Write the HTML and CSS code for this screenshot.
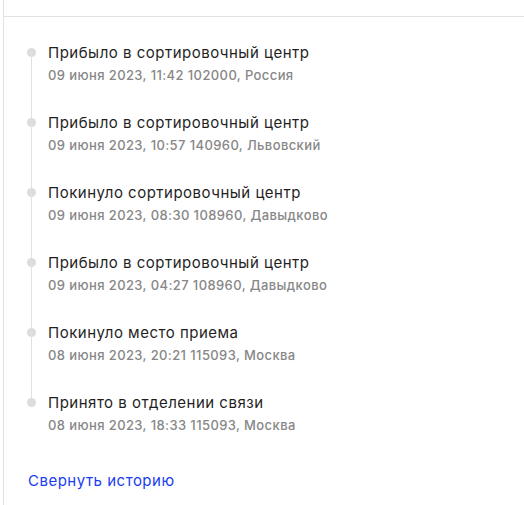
FILE: index.html
```html
<!DOCTYPE html>
<html lang="ru">
<head>
<meta charset="utf-8">
<link rel="stylesheet" href="styles.css">
</head>
<body>
<div class="panel">
  <div class="panel-head"></div>
  <ul class="timeline">
    <li class="event">
      <div class="event-title">Прибыло в сортировочный центр</div>
      <div class="event-meta">09 июня 2023, 11:42 102000, Россия</div>
    </li>
    <li class="event">
      <div class="event-title">Прибыло в сортировочный центр</div>
      <div class="event-meta">09 июня 2023, 10:57 140960, Львовский</div>
    </li>
    <li class="event">
      <div class="event-title">Покинуло сортировочный центр</div>
      <div class="event-meta">09 июня 2023, 08:30 108960, Давыдково</div>
    </li>
    <li class="event">
      <div class="event-title">Прибыло в сортировочный центр</div>
      <div class="event-meta">09 июня 2023, 04:27 108960, Давыдково</div>
    </li>
    <li class="event">
      <div class="event-title">Покинуло место приема</div>
      <div class="event-meta">08 июня 2023, 20:21 115093, Москва</div>
    </li>
    <li class="event">
      <div class="event-title">Принято в отделении связи</div>
      <div class="event-meta">08 июня 2023, 18:33 115093, Москва</div>
    </li>
  </ul>
  <a class="collapse-link" href="#">Свернуть историю</a>
</div>
</body>
</html>
```
FILE: styles.css
```css
html, body {
  margin: 0;
  padding: 0;
  background: #ffffff;
}

body {
  font-family: Inter, "Noto Sans", sans-serif;
  color: #1f1f1f;
}

.panel {
  margin-left: 3px;
  border-left: 1px solid #e2e2e2;
  min-height: 505px;
  box-sizing: border-box;
  display: flex;
  flex-direction: column;
}

.panel-head {
  height: 16px;
  border-bottom: 1px solid #e2e2e2;
}

.timeline {
  list-style: none;
  margin: 0;
  padding: 26px 0 0 44px;
  display: flex;
  flex-direction: column;
  gap: 29px;
}

.event {
  position: relative;
  display: flex;
  flex-direction: column;
  gap: 3px;
}

.event::before {
  content: "";
  position: absolute;
  left: -21px;
  top: 5px;
  width: 9px;
  height: 9px;
  border-radius: 50%;
  background: #dcdcdc;
}

.event::after {
  content: "";
  position: absolute;
  left: -17px;
  top: 10px;
  width: 1px;
  height: 70px;
  background: #e2e2e2;
}

.event:last-child::after {
  display: none;
}

.event-title {
  font-size: 15px;
  line-height: 20px;
  letter-spacing: 0.5px;
  color: #1f1f1f;
}

.event-meta {
  font-size: 13px;
  line-height: 18px;
  font-weight: 450;
  letter-spacing: 0.4px;
  color: #878787;
}

.collapse-link {
  margin: 37px 0 0 24px;
  font-size: 15px;
  line-height: 20px;
  letter-spacing: 0.5px;
  color: #1a3cf0;
  text-decoration: none;
  align-self: flex-start;
}
```
